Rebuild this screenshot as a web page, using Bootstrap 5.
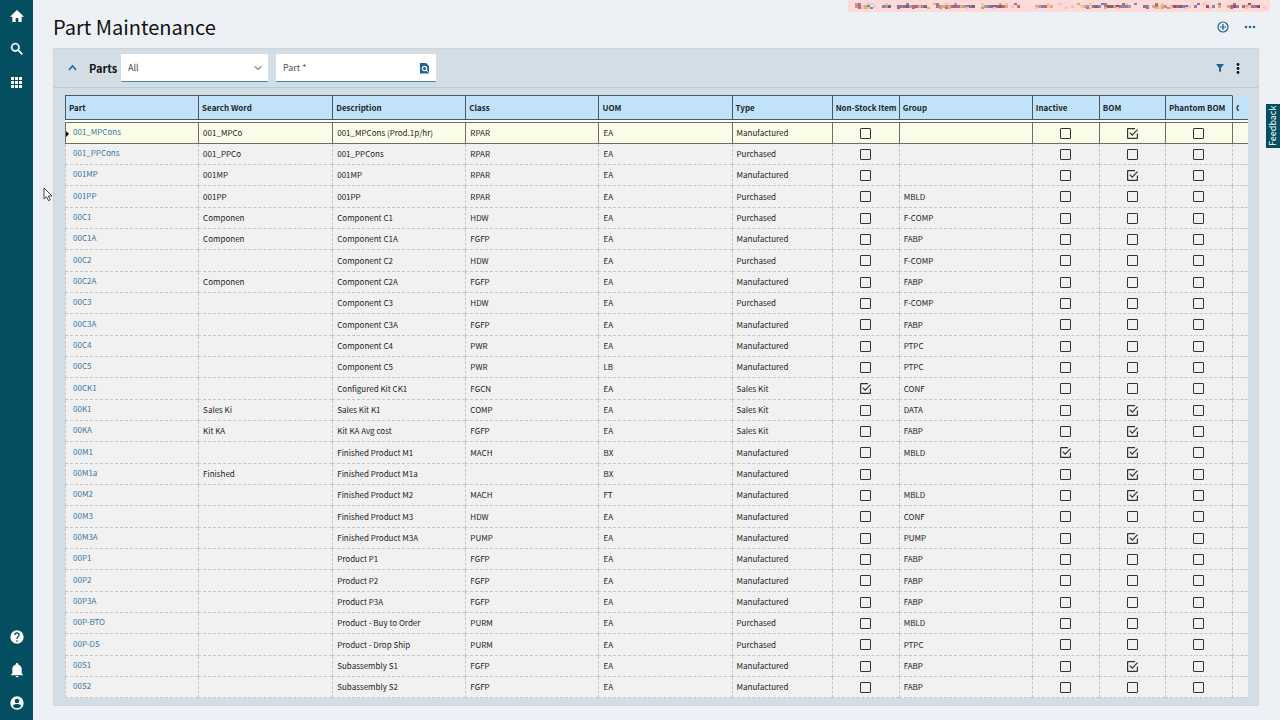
<!DOCTYPE html>
<html lang="en">
<head>
<meta charset="utf-8">
<meta name="viewport" content="width=device-width, initial-scale=1">
<title>Part Maintenance</title>
<link href="https://cdn.jsdelivr.net/npm/bootstrap@5.3.0/dist/css/bootstrap.min.css" rel="stylesheet">
<style>
  body { background: #edf1f5; color: #222; font-family: "Noto Sans CJK SC", "Open Sans", sans-serif; font-size: 8px; line-height: 14px; }
  .rail { width: 33px; background: #034f61; padding: 8px 0 9px; gap: 17px; }
  .rail .btn, .tool { width: 16px; height: 16px; line-height: 0; border: 0; padding: 0; }
  .rail svg, .tool svg { width: 16px; height: 16px; display: block; }
  .rail svg { fill: #fff; }
  .work { min-width: 0; padding: 12px 21px 14px 20px; }
  .page-title { font-size: 20px; line-height: 30px; color: #111; }
  .tool { color: #1f6399; }
  .panel { background: #d2dde5; border: 1px solid #cdd5dc; margin-top: 6px; }
  .panel-bar { height: 39px; padding: 0 11px; border-bottom: 1px solid #b3ced6; }
  .panel-name { width: 32px; font-size: 11px; line-height: 16px; color: #111; }
  .field { height: 28px; border: 0; border-bottom: 1px solid #4c86b0; border-radius: 0; background-color: #fff; padding: 0 7px; font-size: 9px; line-height: 14px; color: #444; }
  .field::placeholder { color: #555; opacity: 1; }
  .pick { width: 147px; background-position: right 6px center; background-size: 8px 8px; }
  .seek { width: 160px; }
  .seek .btn { right: 4px; top: 6px; }
  .field:focus { box-shadow: none; }
  .grid-wrap { margin: 7px 10px 7px 11px; overflow: hidden; background: #f1f1f1; }
  .grid { width: 100%; min-width: 1183px; table-layout: fixed; border-collapse: separate; border-spacing: 0; }
  .grid th, .grid td { padding: 0 0 0 4px; white-space: nowrap; overflow: hidden; vertical-align: middle; }
  .grid thead th { height: 25px; padding-left: 3px; background: #c1e2f8; border: 1px solid #4b5860; border-right: 0; font-weight: 700; color: #1b262d; }
  .grid thead th:last-child { border-top-color: #c1e2f8; padding-right: 9px; }
  .grid thead th:last-child span { display: block; overflow: hidden; }
  .grid .gap-row td { height: 2px; background: #fff; }
  .grid tbody td { height: 21px; border-left: 1px dashed #c6c6c6; border-bottom: 1px dashed #c6c6c6; }
  .grid tbody tr:nth-child(3n+1) td { height: 22px; }
  .grid tbody td:first-child { padding: 0 0 2px 7px; }
  .grid tbody a { color: #3a76a3; text-decoration: none; }
  .grid tbody tr.current td { height: 22px; background: #fcfde9; border: solid #6d6f64; border-width: 1px 0 1px 1px; }
  .grid .tick { padding: 0; text-align: center; }
  .tick input { appearance: none; display: block; width: 11px; height: 11px; margin: 0 auto; border: 1px solid #333; border-radius: 1px; }
  .tick input:checked { border-color: transparent; background: url("data:image/svg+xml,%3Csvg xmlns='http://www.w3.org/2000/svg' viewBox='0 0 11 11' fill='none' stroke='%23333' stroke-width='1.2'%3E%3Cpath d='M8 .6H.6v9.8h9.8V5.5M2.8 4.6l2.4 2.5L10.6 1.6'/%3E%3C/svg%3E") border-box center/11px 11px no-repeat; }
  .grid tbody tr.current td:first-child { position: relative; }
  .current td:first-child::before { content: ""; position: absolute; left: 0; top: 8px; border: 3px solid transparent; border-left-color: #000; border-right: 0; }
  .feedback { right: 0; top: 104px; width: 14px; height: 44px; background: #034f61; color: #fff; border: 0; padding: 0; writing-mode: vertical-rl; transform: rotate(180deg); line-height: 14px; font-size: 9px; }
  .notice { right: 10px; top: 0; width: 422px; height: 12px; background: #fedbd9; }
  .notice svg { display: block; opacity: .8; }
  .pointer { left: 43px; top: 187px; width: 10px; height: 15px; }
</style>
</head>
<body>
<div class="d-flex min-vh-100 position-relative">
  <nav class="rail d-flex flex-column align-items-center flex-shrink-0" aria-label="Main">
    <button class="btn" aria-label="Home"><svg viewBox="0 0 24 24"><path d="M10 21v-6h4v6h5v-8h3.500L12 3 1.500 13H5v8z"/></svg></button>
    <button class="btn" aria-label="Search"><svg viewBox="0 0 24 24"><path d="M15.500 14h-.79l-.28-.27A6.470 6.470 0 0 0 16 9.500 6.500 6.500 0 1 0 9.500 16c1.610 0 3.090-.59 4.230-1.570l.27.28v.79l5 4.990L20.490 19zm-6 0a4.500 4.500 0 1 1 0-9 4.500 4.500 0 0 1 0 9z" stroke="#fff" stroke-width=".6"/></svg></button>
    <button class="btn" aria-label="Applications"><svg viewBox="0 0 16 16"><path d="M2 3h3v3H2zM6 3h3v3H6zM10 3h3v3h-3zM2 7h3v3H2zM6 7h3v3H6zM10 7h3v3h-3zM2 11h3v3H2zM6 11h3v3H6zM10 11h3v3h-3z"/></svg></button>
    <button class="btn mt-auto" aria-label="Help"><svg viewBox="0 0 24 24"><path d="M12 2a10 10 0 1 0 0 20 10 10 0 0 0 0-20zm1 17h-2v-2h2zm2.070-7.750-.9.920C13.450 12.900 13 13.500 13 15h-2v-.5c0-1.100.45-2.100 1.170-2.830l1.240-1.260c.37-.36.59-.86.59-1.410a2 2 0 1 0-4 0H8a4 4 0 1 1 8 0c0 .88-.36 1.680-.93 2.250z"/></svg></button>
    <button class="btn" aria-label="Notifications"><svg viewBox="0 0 24 24"><path d="M12 23c1.100 0 2-.9 2-2h-4c0 1.100.9 2 2 2zm7-6v-6c0-3.500-2-6-5-6.700V3.500a2 2 0 0 0-4 0v.8C7 5 5 7.500 5 11v6l-2 2v1h18v-1z"/></svg></button>
    <button class="btn" aria-label="Account"><svg viewBox="0 0 24 24"><path d="M12 2a10 10 0 1 0 0 20 10 10 0 0 0 0-20zm0 3.500a3.500 3.500 0 1 1 0 7 3.500 3.500 0 0 1 0-7zM12 20c-2.600 0-5-1.300-6.300-3.500.3-2 4.200-3 6.300-3s6 1 6.300 3A7.500 7.500 0 0 1 12 20z"/></svg></button>
  </nav>

  <main class="work flex-grow-1">
    <header class="d-flex align-items-center">
      <h1 class="page-title fw-normal mb-0 me-auto">Part Maintenance</h1>
      <button class="btn tool me-2" aria-label="Add"><svg viewBox="0 0 16 16" fill="none" stroke="currentColor" stroke-width="1.200"><circle cx="8" cy="8" r="5"/><path d="M8 5v6M5 8h6"/></svg></button>
      <button class="btn tool ms-1" aria-label="More"><svg viewBox="0 0 16 16" fill="currentColor"><circle cx="3" cy="8" r="1.300"/><circle cx="7" cy="8" r="1.300"/><circle cx="11" cy="8" r="1.300"/></svg></button>
    </header>

    <section class="panel" aria-label="Parts">
      <div class="panel-bar d-flex align-items-center">
        <button class="btn tool" aria-label="Collapse"><svg viewBox="0 0 16 16" fill="none" stroke="currentColor" stroke-width="1.500"><path d="M4 10l3.500-4L11 10"/></svg></button>
        <h2 class="panel-name fw-bold mb-0 ms-2">Parts</h2>
        <select class="form-select field pick" aria-label="View"><option>All</option></select>
        <div class="seek position-relative ms-2">
          <input class="form-control field" type="text" placeholder="Part *" aria-label="Part">
          <button class="btn tool position-absolute" aria-label="Find part"><svg viewBox="0 0 16 16"><path fill="#1f6399" d="M4 3h6l3 3v7.500H4z"/><circle cx="8.500" cy="8.500" r="2.200" fill="none" stroke="#fff" stroke-width="1.200"/><path d="M10 10l2.500 2.500" stroke="#fff"/></svg></button>
        </div>
        <button class="btn tool ms-auto" aria-label="Filter"><svg viewBox="0 0 16 16"><path fill="#1f6399" d="M5 4h8l-3 4v4.500L8 11V8z"/></svg></button>
        <button class="btn tool ms-1" aria-label="Options"><svg viewBox="0 0 16 16" fill="#111"><circle cx="7" cy="4.500" r="1.400"/><circle cx="7" cy="8.500" r="1.400"/><circle cx="7" cy="12.500" r="1.400"/></svg></button>
      </div>
      <div class="grid-wrap">
        <table class="grid">
          <colgroup id="cols"></colgroup>
          <thead><tr id="heads"></tr><tr class="gap-row" aria-hidden="true"><td colspan="12"></td></tr></thead>
          <tbody id="rows"></tbody>
        </table>
      </div>
    </section>
  </main>

  <div class="notice position-absolute" aria-hidden="true"><svg id="mosaic" width="422" height="12"></svg></div>
  <button class="feedback position-absolute">Feedback</button>
  <svg class="pointer position-absolute" viewBox="0 0 10 15" aria-hidden="true"><path d="M1 1v11l2.500-2.300 2 4 1.800-.9-2-3.800H9z" fill="#fff" stroke="#444"/></svg>
</div>

<script src="https://cdn.jsdelivr.net/npm/bootstrap@5.3.0/dist/js/bootstrap.bundle.min.js"></script>
<script>
  const columns = [["Part", 133], ["Search Word", 134], ["Description", 133], ["Class", 133], ["UOM", 133], ["Type", 100],
    ["Non-Stock Item", 67], ["Group", 133], ["Inactive", 67], ["BOM", 66], ["Phantom BOM", 67], ["C", 16]];
  const types = { M: "Manufactured", P: "Purchased", S: "Sales Kit" };
  // part | search word | description | class | uom | type | group | flags: N non-stock, I inactive, B bom
  const parts = `001_MPCons|001_MPCo|001_MPCons (Prod.1p/hr)|RPAR|EA|M||B
001_PPCons|001_PPCo|001_PPCons|RPAR|EA|P||
001MP|001MP|001MP|RPAR|EA|M||B
001PP|001PP|001PP|RPAR|EA|P|MBLD|
00C1|Componen|Component C1|HDW|EA|P|F-COMP|
00C1A|Componen|Component C1A|FGFP|EA|M|FABP|
00C2||Component C2|HDW|EA|P|F-COMP|
00C2A|Componen|Component C2A|FGFP|EA|M|FABP|
00C3||Component C3|HDW|EA|P|F-COMP|
00C3A||Component C3A|FGFP|EA|M|FABP|
00C4||Component C4|PWR|EA|M|PTPC|
00C5||Component C5|PWR|LB|M|PTPC|
00CK1||Configured Kit CK1|FGCN|EA|S|CONF|N
00K1|Sales Ki|Sales Kit K1|COMP|EA|S|DATA|B
00KA|Kit KA|Kit KA Avg cost|FGFP|EA|S|FABP|B
00M1||Finished Product M1|MACH|BX|M|MBLD|IB
00M1a|Finished|Finished Product M1a||BX|M||B
00M2||Finished Product M2|MACH|FT|M|MBLD|B
00M3||Finished Product M3|HDW|EA|M|CONF|
00M3A||Finished Product M3A|PUMP|EA|M|PUMP|B
00P1||Product P1|FGFP|EA|M|FABP|
00P2||Product P2|FGFP|EA|M|FABP|
00P3A||Product P3A|FGFP|EA|M|FABP|
00P-BTO||Product - Buy to Order|PURM|EA|P|MBLD|
00P-DS||Product - Drop Ship|PURM|EA|P|PTPC|
00S1||Subassembly S1|FGFP|EA|M|FABP|B
00S2||Subassembly S2|FGFP|EA|M|FABP|`.split("\n").map(line => line.split("|"));

  document.getElementById("cols").innerHTML = columns.map(c => `<col style="width:${c[1]}px">`).join("");
  document.getElementById("heads").innerHTML = columns.map(c => `<th scope="col"><span>${c[0]}</span></th>`).join("");
  document.getElementById("rows").innerHTML = parts.map(([part, word, text, cls, uom, type, group, flags], i) => {
    const tick = (flag, name) => `<td class="tick"><input type="checkbox" aria-label="${name}, ${part}"${flags.includes(flag) ? " checked" : ""}></td>`;
    return `<tr${i ? "" : ' class="current"'}><td><a href="#">${part}</a></td><td>${word}</td><td>${text}</td><td>${cls}</td><td>${uom}</td><td>${types[type]}</td>`
      + tick("N", "Non-stock item") + `<td>${group}</td>` + tick("I", "Inactive") + tick("B", "BOM") + tick("H", "Phantom BOM") + "<td></td></tr>";
  }).join("");

  // Scrambled notice text: one character is one 3px tile
  const tones = { r: "#a8526a", b: "#5878a8", o: "#dfa05c", p: "#7b4f94", g: "#9a8e88", k: "#544a5c", l: "#f0bcb0", y: "#ecc890", c: "#b9dbd8", m: "#8c1f58" };
  const tiles = [
    "  gr  lc    l      b        ob  y  g        l     o l  p          l   l     o   l   pb     rl  b      b l           p l    b    r    m     cr      b     ",
    "  grlob c  bgk  prpkgrpobk   rgogopprogbpk  ygbpkpkro l r     ogbryo      l  yogypkb rkkgmrbbg    pb oryog ompkbpl b   m b o  opmb royrbm   bopy",
    "   rloyb        p    r    o   g ro     l    g   l             l         l      bl    o   l         r  oyo gy    l       l      r    l     l  b  "
  ];
  document.getElementById("mosaic").innerHTML = tiles.map((row, y) => [...row].map((t, x) =>
    tones[t] && x < 139 ? `<rect x="${x * 3 + 1}" y="${y * 2 + 3}" width="3" height="${y === 1 ? 3 : 2}" fill="${tones[t]}"/>` : "").join("")).join("");
</script>
</body>
</html>
